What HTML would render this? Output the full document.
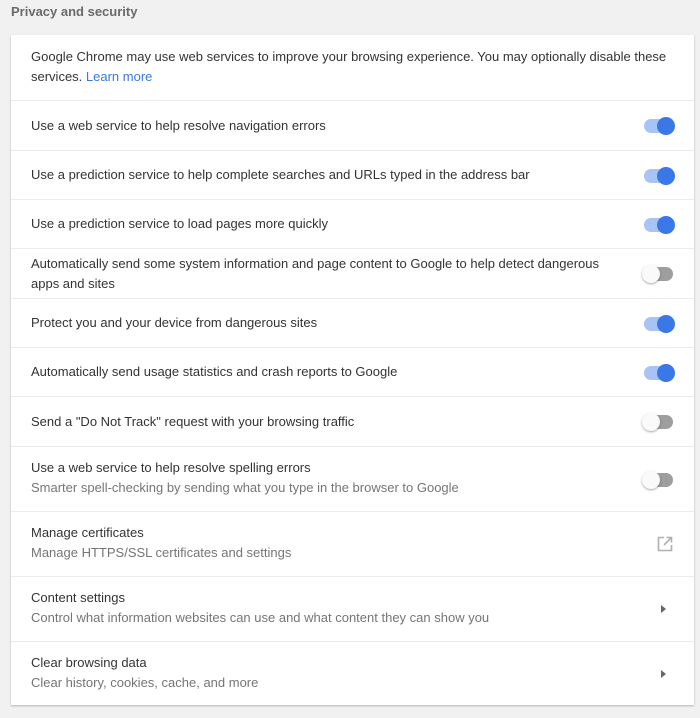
<!DOCTYPE html>
<html><head><style>
body{margin:0;background:#f1f1f1;width:700px;height:718px;overflow:hidden;font-family:"Liberation Sans",Arial,sans-serif;}
.h{position:absolute;left:11px;top:4px;font-size:13px;color:#6a6a6a;font-weight:bold;}
.card{position:absolute;left:11px;top:35px;width:683px;height:670px;background:#fff;box-shadow:0 1px 2px rgba(0,0,0,.25);}
.row{position:absolute;left:0;width:683px;border-top:1px solid #ececec;box-sizing:border-box;}
.row:first-child{border-top:none}
.t{position:absolute;left:20px;font-size:13px;color:#333;line-height:20px;width:590px;}
.s{color:#757575}
a{color:#3b78e7;text-decoration:none}
.tg{position:absolute;right:20px;width:30px;height:14px;}
.tr{position:absolute;left:0;top:0;width:29px;height:14px;border-radius:7px;}
.on .tr{background:#a8c4f5}.off .tr{background:#9e9e9e}
.k{position:absolute;top:-2px;width:18px;height:18px;border-radius:50%;}
.on .k{left:13px;background:#3b78e7}
.off .k{left:-2px;background:#fafafa;box-shadow:0 1px 2px rgba(0,0,0,.35)}
.arr{position:absolute;right:28px;width:0;height:0;border-left:5px solid #666;border-top:4px solid transparent;border-bottom:4px solid transparent;}
</style></head><body>
<div class="h">Privacy and security</div>
<div class="card">
<div class="row" style="top:0;height:65px"><div class="t" style="top:12px;width:650px">Google Chrome may use web services to improve your browsing experience. You may optionally disable these services. <a>Learn more</a></div></div>
<div class="row" style="top:65px;height:50px"><div class="t" style="top:15px">Use a web service to help resolve navigation errors</div><div class="tg on" style="top:18px"><div class="tr"></div><div class="k"></div></div></div>
<div class="row" style="top:115px;height:49px"><div class="t" style="top:14px">Use a prediction service to help complete searches and URLs typed in the address bar</div><div class="tg on" style="top:18px"><div class="tr"></div><div class="k"></div></div></div>
<div class="row" style="top:164px;height:49px"><div class="t" style="top:14px">Use a prediction service to load pages more quickly</div><div class="tg on" style="top:18px"><div class="tr"></div><div class="k"></div></div></div>
<div class="row" style="top:213px;height:50px"><div class="t" style="top:5px">Automatically send some system information and page content to Google to help detect dangerous apps and sites</div><div class="tg off" style="top:18px"><div class="tr"></div><div class="k"></div></div></div>
<div class="row" style="top:263px;height:49px"><div class="t" style="top:14px">Protect you and your device from dangerous sites</div><div class="tg on" style="top:18px"><div class="tr"></div><div class="k"></div></div></div>
<div class="row" style="top:312px;height:49px"><div class="t" style="top:14px">Automatically send usage statistics and crash reports to Google</div><div class="tg on" style="top:18px"><div class="tr"></div><div class="k"></div></div></div>
<div class="row" style="top:361px;height:50px"><div class="t" style="top:15px">Send a "Do Not Track" request with your browsing traffic</div><div class="tg off" style="top:18px"><div class="tr"></div><div class="k"></div></div></div>
<div class="row" style="top:411px;height:65px"><div class="t" style="top:11px">Use a web service to help resolve spelling errors<br><span class="s">Smarter spell-checking by sending what you type in the browser to Google</span></div><div class="tg off" style="top:26px"><div class="tr"></div><div class="k"></div></div></div>
<div class="row" style="top:476px;height:65px"><div class="t" style="top:11px">Manage certificates<br><span class="s">Manage HTTPS/SSL certificates and settings</span></div>
<svg style="position:absolute;right:21px;top:24px" width="16" height="16" viewBox="0 0 16 16" fill="none" stroke="#b0b0b0" stroke-width="1.6"><path d="M7 1.5H1.5v13h13V9"/><path d="M9.5 1.5h5v5M14.5 1.5L7 9"/></svg></div>
<div class="row" style="top:541px;height:65px"><div class="t" style="top:11px">Content settings<br><span class="s">Control what information websites can use and what content they can show you</span></div><div class="arr" style="top:28px"></div></div>
<div class="row" style="top:606px;height:64px"><div class="t" style="top:11px">Clear browsing data<br><span class="s">Clear history, cookies, cache, and more</span></div><div class="arr" style="top:28px"></div></div>
</div>
</body></html>
